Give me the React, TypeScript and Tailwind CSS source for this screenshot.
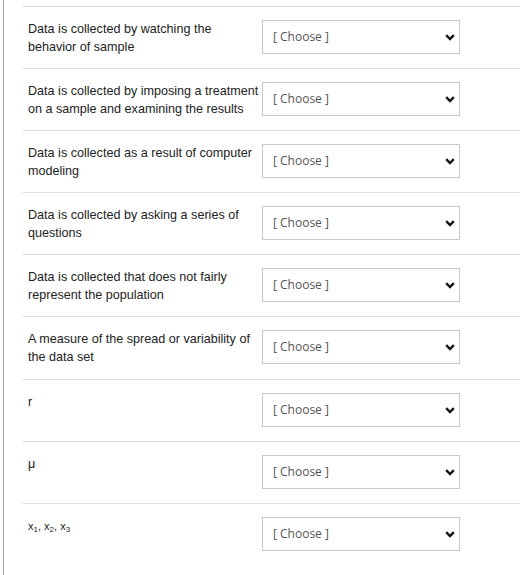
import React from "react";

const rows: React.ReactNode[] = [
  "Data is collected by watching the behavior of sample",
  "Data is collected by imposing a treatment on a sample and examining the results",
  "Data is collected as a result of computer modeling",
  "Data is collected by asking a series of questions",
  "Data is collected that does not fairly represent the population",
  "A measure of the spread or variability of the data set",
  "r",
  "μ",
  <span className="text-[11px]">
    x<sub className="text-[8px]">1</sub>, x<sub className="text-[8px]">2</sub>, x<sub className="text-[8px]">3</sub>
  </span>,
];

function ChooseSelect() {
  return (
    <div className="relative h-[34px] w-[198px] shrink-0">
      <select
        defaultValue=""
        className="h-full w-full appearance-none border border-[#c7c7c7] bg-white pl-[10px] text-[12px] text-[#555] outline-none"
        style={{ fontFamily: '"Open Sans", sans-serif' }}
      >
        <option value="">[ Choose ]</option>
      </select>
      <svg
        className="pointer-events-none absolute right-[5px] top-[14px]"
        width="10"
        height="7"
        viewBox="0 0 10 7"
      >
        <polyline points="1.2,1.2 5,5 8.8,1.2" fill="none" stroke="#111" strokeWidth="2.4" />
      </svg>
    </div>
  );
}

export default function App() {
  return (
    <div className="h-[575px] overflow-hidden bg-white pl-[3px]">
      <div
        className="h-full border-l border-[#a8a8a8] pl-[19px] pt-[6px] text-[12.6px] leading-[18px] text-[#222]"
        style={{ fontFamily: '"Liberation Sans", Arial, sans-serif' }}
      >
        {rows.map((label, i) => (
          <div
            key={i}
            className={`flex items-start border-t border-[#dcdcdc] pt-[13px] ${i === 5 ? "h-[63px]" : "h-[62px]"}`}
          >
            <div className="w-[239px] shrink-0 pl-[5px] pr-[2px]">{label}</div>
            <ChooseSelect />
          </div>
        ))}
      </div>
    </div>
  );
}
